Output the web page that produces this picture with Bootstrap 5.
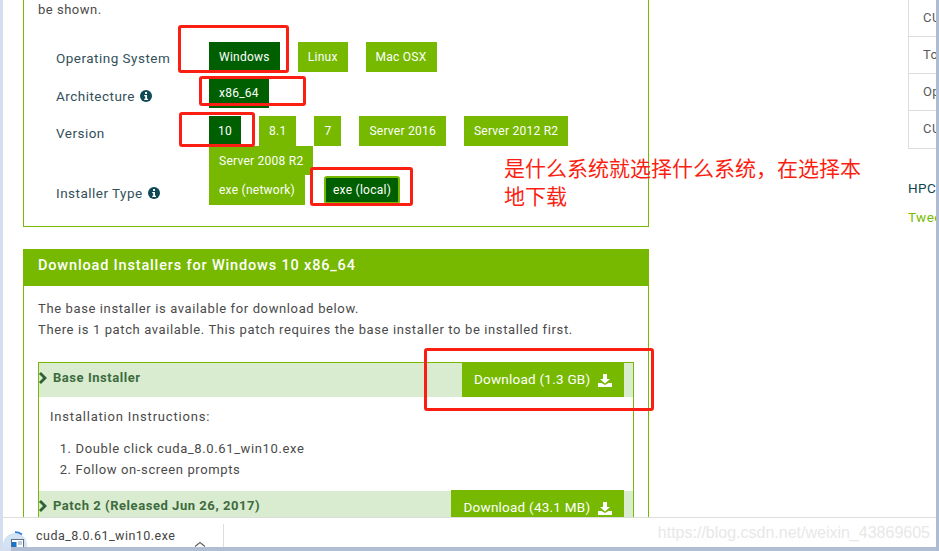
<!doctype html>
<html lang="en"><head><meta charset="utf-8">
<link href="https://cdn.jsdelivr.net/npm/bootstrap@5.3.0/dist/css/bootstrap.min.css" rel="stylesheet">
<style>
html,body{height:551px;overflow:hidden;background:#fff}
body{font-family:Roboto,"Liberation Sans",sans-serif;font-size:13px;letter-spacing:.62px;color:#4a4a4a;position:relative}
.shot-frame{height:551px;border-left:3px solid #d3deee;border-right:3px solid #adbbd3}
.shot-page{height:517px;overflow:hidden}
.left-col{width:626px;margin-left:20px}
.right-col{margin-left:259px;width:28px;overflow:hidden;flex:none}
.opt-panel{height:227px;border:1px solid #76b900;border-top:0;padding:0 14px}
.opt-intro{line-height:19px;height:42px;margin:0;letter-spacing:.5px}
.opt-row{display:flex}
.row-os{height:36px}
.row-arch{height:38px}
.opt-label{width:171px;padding-left:18px;font-size:13.5px;letter-spacing:.48px;color:#33505a;flex:none}
.lbl-os{padding-top:6px}
.lbl-arch{padding-top:8px}
.lbl-ver{padding-top:7px}
.lbl-inst{padding-top:8px}
.opt-btns{display:flex;flex-wrap:wrap;column-gap:18px;width:424px}
.opt-btn{height:29.5px;line-height:30px;padding:0 10px;background:#76b900;color:#fff;font-size:12px;letter-spacing:.25px;white-space:nowrap}
.opt-btn.on{background:#005f00}
.opt-btn.tight{padding:0 9px}
.opt-btn.focus{border:2px solid #76b900;border-radius:3px;height:28px;line-height:25px;margin:1px 0 0 1px;padding:0 7px}
.ico-info{width:12px;height:12px;vertical-align:-1px;margin-left:1px}
.dl-panel{margin-top:22px;height:300px;border:1px solid #76b900;border-bottom:0}
.dl-head{height:37px;line-height:33px;background:#76b900;color:#fff;font-size:14.5px;font-weight:500;letter-spacing:.84px;padding-left:15px;margin:-1px -1px 0}
.dl-intro{padding:12px 14px 0;line-height:21px;margin:0;height:76px}
.inst-box{margin:0 14px;border:1px solid #76b900;border-bottom:0;height:200px}
.inst-head{background:#d9ecd0;color:#3d6b3d;font-weight:700;font-size:13px;letter-spacing:.55px;padding-right:9px}
.row-base{height:34px}
.row-patch{height:40px}
.inst-name{line-height:30px}
.chev{width:9px;height:12px;margin:0 5px 0 0;flex:none}
.dl-btn{background:#76b900;color:#fff;font-size:13.5px;font-weight:400;letter-spacing:.24px;height:35px;line-height:35px;margin-top:-1px;padding:0 12px;white-space:nowrap}
.dl-ico{margin-left:2px}
.inst-body{height:94px;padding:10px 11px 0}
.inst-body p{margin:0 0 11px;line-height:20px;letter-spacing:.8px}
.inst-body ol{margin:0;padding-left:25.5px;line-height:21px}
.side-tbl{width:40px;margin-bottom:0;border:1px solid #ddd;border-top:0}
.side-cell{height:37px;line-height:36px;padding-left:14px;border-bottom:1px solid #ddd;color:#5a5a5a;white-space:nowrap;font-size:13px;letter-spacing:.42px}
.side-cell:last-child{border-bottom:0}
.side-h{margin-top:30px;color:#0f4652;font-size:13.5px;letter-spacing:.42px;line-height:18px}
.side-l{margin-top:10px;color:#76b900;font-size:13.5px;letter-spacing:.42px}
.dl-bar{height:30px;border-top:1px solid #ddd;color:#444;padding-left:33px}
.bar-file{font-size:12.5px;width:187px;line-height:36px;letter-spacing:.48px}
.bar-sep{width:1px;height:23px;margin-top:6px;background:#ddd}
.mark-text{margin-left:auto;margin-right:6px;font-family:"Liberation Sans",sans-serif;font-size:16px;letter-spacing:0;color:#e8e8e8;line-height:29px}
.strip-low{height:4px;background:linear-gradient(90deg,#d3deee 8px,#b0bdd2 8px)}
.ann{position:absolute;border:3px solid #fb1f13;border-radius:3px}
.ann-text{position:absolute;left:504px;top:153px;width:366px;color:#fb1f13;font-family:"Noto Sans CJK SC",sans-serif;font-size:21px;line-height:28px;letter-spacing:0;margin:0}
.bar-ico{position:absolute;left:3px;top:531px}
.bar-chev{position:absolute;left:194px;top:541px}
.a-os{left:178px;top:25px;width:111px;height:48px}
.a-arch{left:199px;top:76px;width:107px;height:30px}
.a-ver{left:179px;top:112px;width:76px;height:35px}
.a-type{left:310px;top:167px;width:103px;height:39px}
.a-dl{left:424px;top:348px;width:230px;height:63px}
</style></head><body>
<div class="shot-frame">
<div class="shot-page d-flex">
<div class="left-col flex-none">
<div class="opt-panel">
<p class="opt-intro">be shown.</p>
<div class="opt-row row-os"><div class="opt-label lbl-os">Operating System</div><div class="opt-btns"><span class="opt-btn on">Windows</span><span class="opt-btn">Linux</span><span class="opt-btn">Mac OSX</span></div></div>
<div class="opt-row row-arch"><div class="opt-label lbl-arch">Architecture <svg class="ico-info" viewBox="0 0 12 12"><circle cx="6" cy="6" r="6" fill="#0d4a55"/><rect x="5" y="2" width="2" height="2" fill="#fff"/><path d="M4.2 5h2.8v3.8h1V10H4.2V8.8h1V6.2h-1z" fill="#fff"/></svg></div><div class="opt-btns"><span class="opt-btn on">x86_64</span></div></div>
<div class="opt-row"><div class="opt-label lbl-ver">Version</div><div class="opt-btns"><span class="opt-btn on tight">10</span><span class="opt-btn">8.1</span><span class="opt-btn">7</span><span class="opt-btn">Server 2016</span><span class="opt-btn">Server 2012 R2</span><span class="opt-btn">Server 2008 R2</span></div></div>
<div class="opt-row"><div class="opt-label lbl-inst">Installer Type <svg class="ico-info" viewBox="0 0 12 12"><circle cx="6" cy="6" r="6" fill="#0d4a55"/><rect x="5" y="2" width="2" height="2" fill="#fff"/><path d="M4.2 5h2.8v3.8h1V10H4.2V8.8h1V6.2h-1z" fill="#fff"/></svg></div><div class="opt-btns"><span class="opt-btn">exe (network)</span><span class="opt-btn on focus">exe (local)</span></div></div>
</div>
<div class="dl-panel">
<div class="dl-head">Download Installers for Windows 10 x86_64</div>
<p class="dl-intro">The base installer is available for download below.<br>There is 1 patch available. This patch requires the base installer to be installed first.</p>
<div class="inst-box">
<div class="inst-head row-base d-flex justify-content-between"><div class="inst-name d-flex align-items-center align-self-start"><svg class="chev" viewBox="0 0 9 12"><path d="M1 1l5 5-5 5" fill="none" stroke="#2f5f35" stroke-width="2.8"/></svg>Base Installer</div><div class="dl-btn">Download (1.3 GB) <svg class="dl-ico ms-1" width="14" height="13" viewBox="0 0 14 13"><path d="M5 0h4v5h3L7 9.5 2 5h3zM0 9h3.5L7 11l3.5-2H14v4H0z" fill="#fff"/></svg></div></div>
<div class="inst-body"><p>Installation Instructions:</p><ol><li>Double click cuda_8.0.61_win10.exe</li><li>Follow on-screen prompts</li></ol></div>
<div class="inst-head row-patch d-flex justify-content-between"><div class="inst-name d-flex align-items-center align-self-start"><svg class="chev" viewBox="0 0 9 12"><path d="M1 1l5 5-5 5" fill="none" stroke="#2f5f35" stroke-width="2.8"/></svg>Patch 2 (Released Jun 26, 2017)</div><div class="dl-btn">Download (43.1 MB) <svg class="dl-ico ms-1" width="14" height="13" viewBox="0 0 14 13"><path d="M5 0h4v5h3L7 9.5 2 5h3zM0 9h3.5L7 11l3.5-2H14v4H0z" fill="#fff"/></svg></div></div>
</div>
</div>
</div>
<div class="right-col">
<div class="side-tbl"><div class="side-cell">CUDA</div><div class="side-cell">Tools</div><div class="side-cell">OpenACC</div><div class="side-cell">CUDA</div></div>
<div class="side-h">HPC</div><div class="side-l">Tweets</div>
</div>
</div>
<div class="dl-bar d-flex">
<div class="bar-file">cuda_8.0.61_win10.exe</div><div class="bar-sep"></div><div class="mark-text">https://blog.csdn.net/weixin_43869605</div>
</div>
<div class="strip-low"></div>
</div>
<svg class="bar-ico" width="24" height="16" viewBox="0 0 24 16"><circle cx="12" cy="14" r="12" fill="#d4e3f4"/><path d="M12 1.2a12 12 0 0 1 7 2.2" fill="none" stroke="#2f7fd8" stroke-width="1.8"/><rect x="8.5" y="8.5" width="12" height="8" fill="#fff" stroke="#5a6f85"/><rect x="9" y="11" width="4.5" height="5" fill="#1a73c8"/><path d="M15 11h4M15 13h4" stroke="#8a99a8"/></svg>
<svg class="bar-chev" width="12" height="6" viewBox="0 0 12 6"><path d="M1 5.5l5-4 5 4" fill="none" stroke="#666" stroke-width="1.3"/></svg>
<div class="ann a-os"></div>
<div class="ann a-arch"></div>
<div class="ann a-ver"></div>
<div class="ann a-type"></div>
<div class="ann a-dl"></div>
<p class="ann-text">是什么系统就选择什么系统，在选择本地下载</p>
</body></html>
